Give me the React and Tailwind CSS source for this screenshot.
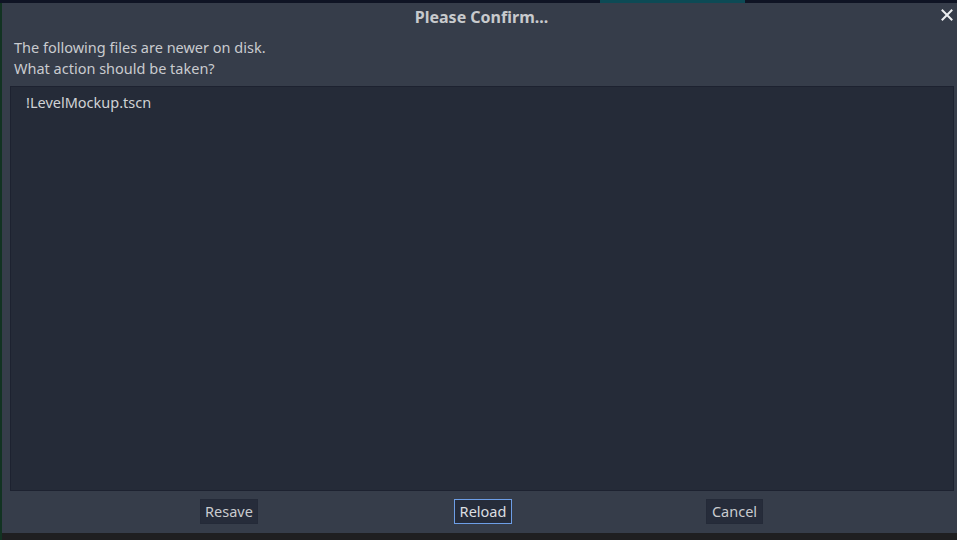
export default function App() {
  return (
    <div
      className="w-[957px] h-[540px] bg-[#1f1f21] flex flex-col overflow-hidden"
      style={{ fontFamily: '"Noto Sans", sans-serif' }}
    >
      {/* background strip behind the dialog */}
      <div className="h-[3px] bg-[#0f1424] flex">
        <div className="w-[600px]" />
        <div className="w-[145px] bg-[#0d4a55]" />
      </div>
      <div className="flex flex-1">
        <div className="w-[2px] bg-[#123322]" />
        {/* dialog */}
        <div className="flex-1 h-[530px] bg-[#363d4a] flex flex-col">
          <div className="relative h-[28px] flex items-center justify-center">
            <span className="text-[16px] font-bold text-[#c8cacd] pl-[4px]">Please Confirm...</span>
            <svg className="absolute right-[4px] top-[6px]" width="12" height="12" viewBox="0 0 12 12">
              <path d="M1.5 1.5 L10.5 10.5 M10.5 1.5 L1.5 10.5" stroke="#eceef0" strokeWidth="2" strokeLinecap="square" />
            </svg>
          </div>
          <div className="px-[12px] pt-[6px] text-[14.5px] leading-[21px] text-[#c9cbcf]">
            <p>The following files are newer on disk.</p>
            <p>What action should be taken?</p>
          </div>
          <div className="ml-[8px] mr-[3px] mt-[7px] h-[405px] bg-[#252b38] border border-[#1d2230] px-[15px] pt-[5px]">
            <p className="text-[14.5px] leading-[20px] text-[#d0d2d5]">!LevelMockup.tscn</p>
          </div>
          <div className="flex items-start pt-[8px] text-[14.5px] text-[#c9cbcf]">
            <div className="w-[198px]" />
            <button className="w-[58px] h-[25px] bg-[#262c3a] border border-[#21263232] flex items-center justify-center">
              Resave
            </button>
            <div className="w-[196px]" />
            <button className="w-[58px] h-[25px] bg-[#262c3a] border border-[#6d9ee6] text-[#dcdee1] flex items-center justify-center">
              Reload
            </button>
            <div className="w-[194px]" />
            <button className="w-[57px] h-[25px] bg-[#262c3a] border border-[#21263232] flex items-center justify-center">
              Cancel
            </button>
          </div>
        </div>
      </div>
    </div>
  );
}
